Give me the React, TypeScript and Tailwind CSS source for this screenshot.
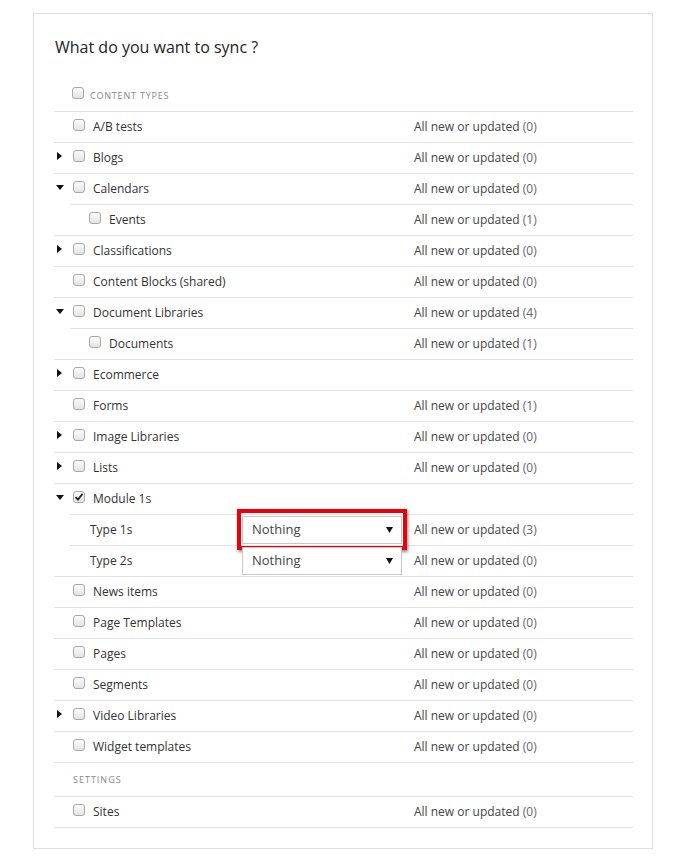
import React from 'react'

type Item = {
	label: string
	status?: string
	arrow?: 'right' | 'down'
	checked?: boolean
	children?: Item[]
	select?: boolean
	highlight?: boolean
}

const items: Item[] = [
	{ label: 'A/B tests', status: '0' },
	{ label: 'Blogs', status: '0', arrow: 'right' },
	{ label: 'Calendars', status: '0', arrow: 'down', children: [{ label: 'Events', status: '1' }] },
	{ label: 'Classifications', status: '0', arrow: 'right' },
	{ label: 'Content Blocks (shared)', status: '0' },
	{ label: 'Document Libraries', status: '4', arrow: 'down', children: [{ label: 'Documents', status: '1' }] },
	{ label: 'Ecommerce', arrow: 'right' },
	{ label: 'Forms', status: '1' },
	{ label: 'Image Libraries', status: '0', arrow: 'right' },
	{ label: 'Lists', status: '0', arrow: 'right' },
	{
		label: 'Module 1s',
		arrow: 'down',
		checked: true,
		children: [
			{ label: 'Type 1s', status: '3', select: true, highlight: true },
			{ label: 'Type 2s', status: '0', select: true },
		],
	},
	{ label: 'News items', status: '0' },
	{ label: 'Page Templates', status: '0' },
	{ label: 'Pages', status: '0' },
	{ label: 'Segments', status: '0' },
	{ label: 'Video Libraries', status: '0', arrow: 'right' },
	{ label: 'Widget templates', status: '0' },
]

function Checkbox({ checked }: { checked?: boolean }) {
	return (
		<span className="relative inline-block w-[12px] h-[12px] shrink-0 rounded-[3px] border border-[#a9a9a9] bg-gradient-to-b from-[#fbfbfb] to-[#e4e4e4] mb-[5px]">
			{checked && (
				<svg viewBox="0 0 12 12" className="absolute -left-px -top-px w-[12px] h-[12px]">
					<path d="M2.5 6.2 L5 8.6 L9.6 2.8" fill="none" stroke="#222" strokeWidth="1.8" />
				</svg>
			)}
		</span>
	)
}

function Arrow({ dir }: { dir?: 'right' | 'down' }) {
	return (
		<span className="w-[19px] shrink-0 flex items-center mb-[4px]">
			{dir === 'right' && (
				<svg width="5" height="8" viewBox="0 0 5 8" className="ml-[3px]">
					<path d="M0 0 L5 4 L0 8 Z" fill="#111" />
				</svg>
			)}
			{dir === 'down' && (
				<svg width="8" height="5" viewBox="0 0 8 5" className="ml-[2px]">
					<path d="M0 0 L8 0 L4 5 Z" fill="#111" />
				</svg>
			)}
		</span>
	)
}

function Status({ n }: { n?: string }) {
	if (!n) return null
	return (
		<span className="text-[12px] text-[#444]">
			All new or updated <span className="text-[#666]">({n})</span>
		</span>
	)
}

function Row({ item, nested }: { item: Item; nested?: boolean }) {
	if (item.select) {
		return (
			<div className="ml-[16px] h-[31px] border-t border-[#e3e3e3] flex items-start">
				<span className="w-[172px] pl-[20px] h-[30px] flex items-center text-[12px] text-[#333]">{item.label}</span>
				<div className="relative w-[160px] h-[28px] mt-px">
					{item.highlight && (
						<span className="absolute -left-[5px] -right-[5px] -top-[7px] -bottom-[6px] border-4 border-[#e8000d] shadow-[1px_2px_3px_rgba(0,0,0,0.45)]" />
					)}
					<div className="w-full h-full border border-[#c8c8c8] bg-white flex items-center justify-between pl-[9px] pr-[8px] text-[13px] text-[#444]">
						<span>Nothing</span>
						<svg width="7" height="6" viewBox="0 0 7 6">
							<path d="M0 0 L7 0 L3.5 6 Z" fill="#111" />
						</svg>
					</div>
				</div>
				<span className="ml-[12px] h-[30px] flex items-center">
					<Status n={item.status} />
				</span>
			</div>
		)
	}
	return (
		<>
			<div className={`${nested ? 'ml-[16px]' : ''} h-[31px] border-t border-[#e3e3e3] flex items-center`}>
				<div className={`${nested ? 'w-[344px]' : 'w-[360px]'} flex items-center`}>
					<Arrow dir={item.arrow} />
					<Checkbox checked={item.checked} />
					<span className="ml-[8px] text-[12px] text-[#333]">{item.label}</span>
				</div>
				<Status n={item.status} />
			</div>
			{item.children?.map((c) => <Row key={c.label} item={c} nested />)}
		</>
	)
}

export default function App() {
	return (
		<div className="min-h-screen bg-white pt-[13px] pl-[33px] font-['Open_Sans',sans-serif]">
			<div className="w-[620px] border border-[#dedede] pt-[22px] pl-[20px] pr-[19px] pb-[20px]">
				<h2 className="text-[16px] leading-[22px] text-[#222] pl-px">What do you want to sync ?</h2>
				<div className="mt-[22px] h-[31px] flex items-center pl-[18px]">
					<Checkbox />
					<span className="ml-[6px] text-[9px] tracking-[0.8px] text-[#888] uppercase">Content types</span>
				</div>
				{items.map((i) => (
					<Row key={i.label} item={i} />
				))}
				<div className="h-[34px] border-t border-[#e3e3e3] flex items-center pl-[19px]">
					<span className="text-[9px] tracking-[1px] text-[#888] uppercase">Settings</span>
				</div>
				<div className="border-b border-[#e3e3e3]">
					<Row item={{ label: 'Sites', status: '0' }} />
				</div>
			</div>
		</div>
	)
}
